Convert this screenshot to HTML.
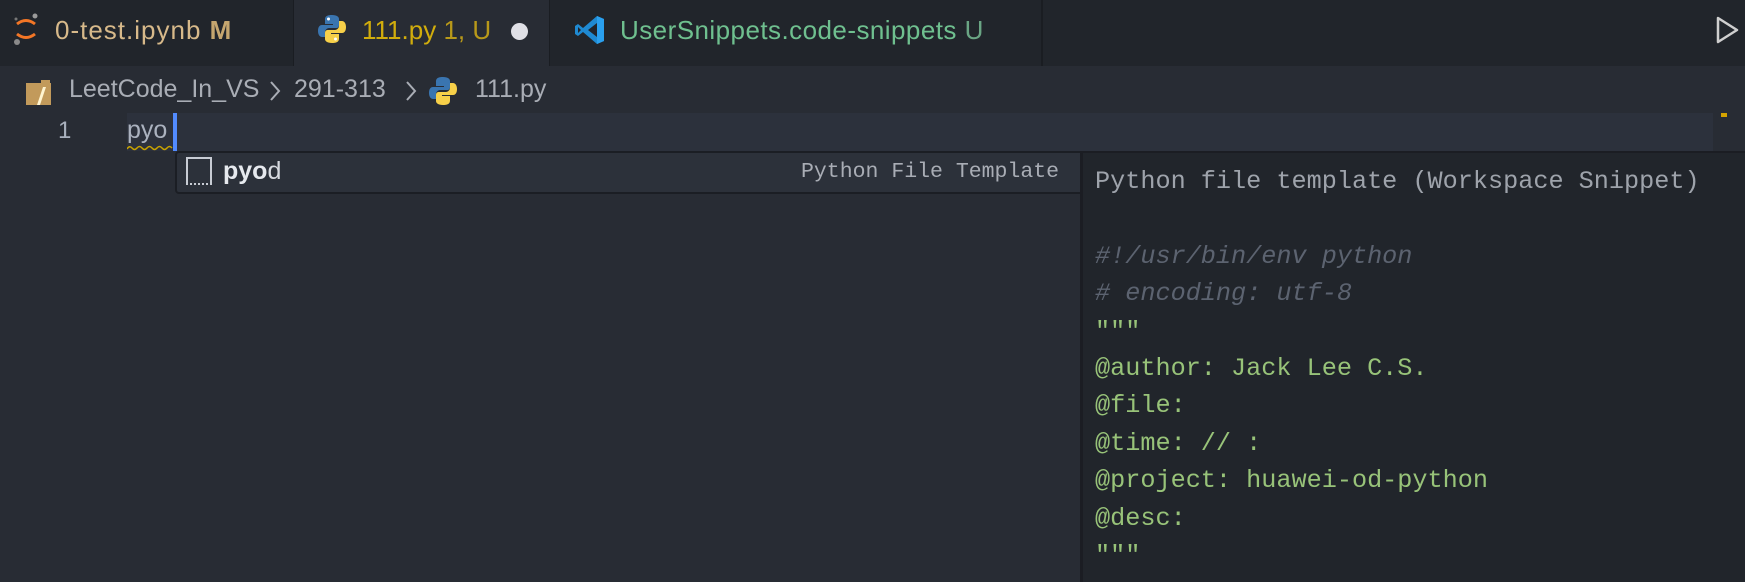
<!DOCTYPE html>
<html><head><meta charset="utf-8"><style>
*{margin:0;padding:0;box-sizing:border-box}
body{width:1745px;height:582px;background:#282c34;position:relative;overflow:hidden;font-family:"Liberation Sans",sans-serif}
.a{position:absolute;white-space:pre}
.mono{font-family:"Liberation Mono",monospace}
</style></head><body>
<div class="a" style="left:0;top:0;width:1745px;height:66px;background:#21252b"></div>
<div class="a" style="left:293px;top:0;width:257px;height:66px;background:#282c34;border-left:1px solid #1a1d22;border-right:1px solid #1a1d22"></div>
<div class="a" style="left:550px;top:0;width:493px;height:66px;border-right:2px solid #1a1d22"></div>
<svg class="a" style="left:12px;top:12px" width="28" height="34" viewBox="0 0 28 34">
<path d="M5 12 Q14 5 23 12" stroke="#f37626" stroke-width="3" fill="none"/>
<path d="M5 22 Q14 29 23 22" stroke="#f37626" stroke-width="3" fill="none"/>
<circle cx="23" cy="4" r="2.5" fill="#9a9a9a"/><circle cx="5" cy="30" r="3" fill="#8a8a8a"/><circle cx="4" cy="7" r="1.5" fill="#777"/>
</svg>
<div class="a" style="left:55px;top:15px;font-size:26px;letter-spacing:1px;color:#d7b98a">0-test.ipynb <span style="color:#c5a66f;font-weight:bold">M</span></div>
<svg class="a" style="left:317px;top:14px" width="30" height="30" viewBox="0 0 30 30">
<path d="M15 1 C8 1 8 4 8 6 L8 10 L16 10 L16 11 L5 11 C2 11 1 14 1 17 C1 21 3 23 5 23 L8 23 L8 18 C8 16 10 14 12 14 L19 14 C21 14 22 13 22 11 L22 5 C22 3 20 1 15 1Z" fill="#3a75b0"/>
<path d="M15 29 C22 29 22 26 22 24 L22 20 L14 20 L14 19 L25 19 C28 19 29 16 29 13 C29 9 27 7 25 7 L22 7 L22 12 C22 14 20 16 18 16 L11 16 C9 16 8 17 8 19 L8 25 C8 27 10 29 15 29Z" fill="#f7d049"/>
<circle cx="11.5" cy="5" r="1.5" fill="#fff"/><circle cx="18.5" cy="25" r="1.5" fill="#fff"/>
</svg>
<div class="a" style="left:362px;top:15px;font-size:26px;color:#d1ad0c">111.py <span style="color:#b8991a">1, U</span></div>
<div class="a" style="left:511px;top:23px;width:17px;height:17px;border-radius:50%;background:#e0e0e6"></div>
<svg class="a" style="left:574px;top:14px" width="32" height="32" viewBox="0 0 32 32">
<path d="M23 2 L30 5 L30 27 L23 30 L9 18 L4 22 L1 20 L1 12 L4 10 L9 14Z M23 9 L14 16 L23 23Z M4 13 L4 19 L7 16Z" fill="#1f8ad2"/>
<path d="M23 2 L30 5 L30 27 L23 30Z" fill="#2aa0ee"/>
</svg>
<div class="a" style="left:620px;top:15px;font-size:26px;letter-spacing:0.45px;color:#6fc08f">UserSnippets.code-snippets <span style="color:#6aa584">U</span></div>
<svg class="a" style="left:1716px;top:16px" width="24" height="28" viewBox="0 0 24 28"><path d="M2 2 L21 14 L2 26Z" stroke="#cfcfcf" stroke-width="2.5" fill="none" stroke-linejoin="round"/></svg>
<svg class="a" style="left:25px;top:78px" width="30" height="28" viewBox="0 0 30 28">
<path d="M1 5 L1 27 L26 27 L26 5 Z" fill="#c29a5b"/><path d="M16 2 L25 2 L25 5 L16 5Z" fill="#c29a5b"/>
<path d="M12 27 L18 9 L21 9 L15 27Z" fill="#fff4d0"/>
</svg>
<div class="a" style="left:69px;top:75px;font-size:25px;color:#a9adb5">LeetCode_In_VS</div>
<svg class="a" style="left:268px;top:80px" width="14" height="22" viewBox="0 0 14 22"><path d="M3 2 L11 11 L3 20" stroke="#a9adb5" stroke-width="2" fill="none"/></svg>
<div class="a" style="left:294px;top:75px;font-size:25px;color:#a9adb5">291-313</div>
<svg class="a" style="left:404px;top:80px" width="14" height="22" viewBox="0 0 14 22"><path d="M3 2 L11 11 L3 20" stroke="#a9adb5" stroke-width="2" fill="none"/></svg>
<svg class="a" style="left:428px;top:76px" width="30" height="30" viewBox="0 0 30 30">
<path d="M15 1 C8 1 8 4 8 6 L8 10 L16 10 L16 11 L5 11 C2 11 1 14 1 17 C1 21 3 23 5 23 L8 23 L8 18 C8 16 10 14 12 14 L19 14 C21 14 22 13 22 11 L22 5 C22 3 20 1 15 1Z" fill="#3a75b0"/>
<path d="M15 29 C22 29 22 26 22 24 L22 20 L14 20 L14 19 L25 19 C28 19 29 16 29 13 C29 9 27 7 25 7 L22 7 L22 12 C22 14 20 16 18 16 L11 16 C9 16 8 17 8 19 L8 25 C8 27 10 29 15 29Z" fill="#f7d049"/>
</svg>
<div class="a" style="left:475px;top:75px;font-size:25px;color:#a9adb5">111.py</div>
<div class="a" style="left:127px;top:113px;width:1586px;height:38px;background:#2c313c"></div>
<div class="a" style="left:1721px;top:113px;width:6px;height:4px;background:#d4a300"></div>
<div class="a" style="left:58px;top:117px;font-size:24px;color:#a8b0bd">1</div>
<div class="a" style="left:127px;top:116px;font-size:25px;color:#abb2bf">pyo</div>
<svg class="a" style="left:127px;top:145px" width="46" height="6" viewBox="0 0 46 6"><path d="M0 4 Q2.5 0 5 3 T10 3 T15 3 T20 3 T25 3 T30 3 T35 3 T40 3 T45 3" stroke="#c9a300" stroke-width="1.5" fill="none"/></svg>
<div class="a" style="left:173px;top:113px;width:4px;height:38px;background:#528bff"></div>
<div class="a" style="left:175px;top:151px;width:910px;height:43px;background:#2c313a;border:2px solid #1b1e24;border-radius:4px"></div>
<div class="a" style="left:186px;top:157px;width:26px;height:28px;border:2px solid #c8ccd4;border-bottom:2px dotted #c8ccd4"></div>
<div class="a" style="left:223px;top:157px;font-size:25px;font-weight:bold;color:#e6e9ee">pyo<span style="font-weight:normal;color:#d7dae0">d</span></div>
<div class="a mono" style="left:801px;top:160px;font-size:21.5px;color:#a9adb5">Python File Template</div>
<div class="a" style="left:1080px;top:151px;width:665px;height:431px;background:#21252b;border-left:3px solid #1b1d23;border-top:2px solid #1b1d23"></div>
<div class="mono a" style="left:1095px;top:163px;font-size:25.2px;line-height:37.4px;color:#9ea3ab">Python file template (Workspace Snippet)

<span style="color:#5c6370;font-style:italic">#!/usr/bin/env python
# encoding: utf-8</span>
<span style="color:#98c379">"""
@author: Jack Lee C.S.
@file:
@time: // :
@project: huawei-od-python
@desc:
"""</span></div>
</body></html>
